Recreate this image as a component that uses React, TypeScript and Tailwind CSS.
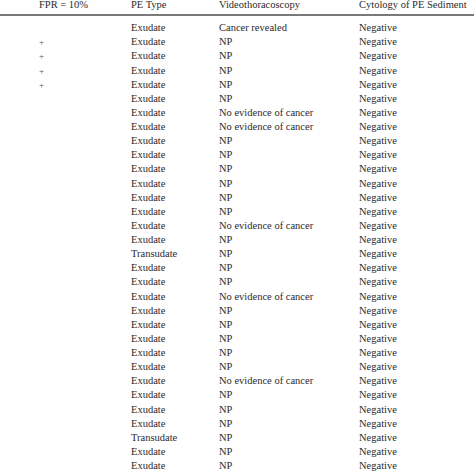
const rows: [string, string, string, string][] = [
  ["", "Exudate", "Cancer revealed", "Negative"],
  ["+", "Exudate", "NP", "Negative"],
  ["+", "Exudate", "NP", "Negative"],
  ["+", "Exudate", "NP", "Negative"],
  ["+", "Exudate", "NP", "Negative"],
  ["", "Exudate", "NP", "Negative"],
  ["", "Exudate", "No evidence of cancer", "Negative"],
  ["", "Exudate", "No evidence of cancer", "Negative"],
  ["", "Exudate", "NP", "Negative"],
  ["", "Exudate", "NP", "Negative"],
  ["", "Exudate", "NP", "Negative"],
  ["", "Exudate", "NP", "Negative"],
  ["", "Exudate", "NP", "Negative"],
  ["", "Exudate", "NP", "Negative"],
  ["", "Exudate", "No evidence of cancer", "Negative"],
  ["", "Exudate", "NP", "Negative"],
  ["", "Transudate", "NP", "Negative"],
  ["", "Exudate", "NP", "Negative"],
  ["", "Exudate", "NP", "Negative"],
  ["", "Exudate", "No evidence of cancer", "Negative"],
  ["", "Exudate", "NP", "Negative"],
  ["", "Exudate", "NP", "Negative"],
  ["", "Exudate", "NP", "Negative"],
  ["", "Exudate", "NP", "Negative"],
  ["", "Exudate", "NP", "Negative"],
  ["", "Exudate", "No evidence of cancer", "Negative"],
  ["", "Exudate", "NP", "Negative"],
  ["", "Exudate", "NP", "Negative"],
  ["", "Exudate", "NP", "Negative"],
  ["", "Transudate", "NP", "Negative"],
  ["", "Exudate", "NP", "Negative"],
  ["", "Exudate", "NP", "Negative"],
];

const cols = "grid grid-cols-[131px_88px_140px_1fr]";

export default function App() {
  return (
    <div
      className="w-[474px] h-[474px] overflow-hidden bg-white text-[#2b2b2b] text-[10.5px] leading-[14.13px]"
      style={{ fontFamily: '"Liberation Serif", "Times New Roman", serif' }}
    >
      {/* header */}
      <div className={`${cols} -mt-[2.5px] pb-[2.5px] border-b-2 border-[#7a7a7a]`}>
        <div className="pl-[39px]">FPR = 10%</div>
        <div>PE Type</div>
        <div>Videothoracoscopy</div>
        <div className="whitespace-nowrap">Cytology of PE Sediment</div>
      </div>

      {/* body */}
      <div className="pt-[5px]">
        {rows.map((r, i) => (
          <div key={i} className={cols}>
            <div className="pl-[39px] text-[9px] text-[#555]">{r[0]}</div>
            <div>{r[1]}</div>
            <div className="whitespace-nowrap">{r[2]}</div>
            <div>{r[3]}</div>
          </div>
        ))}
      </div>
    </div>
  );
}
